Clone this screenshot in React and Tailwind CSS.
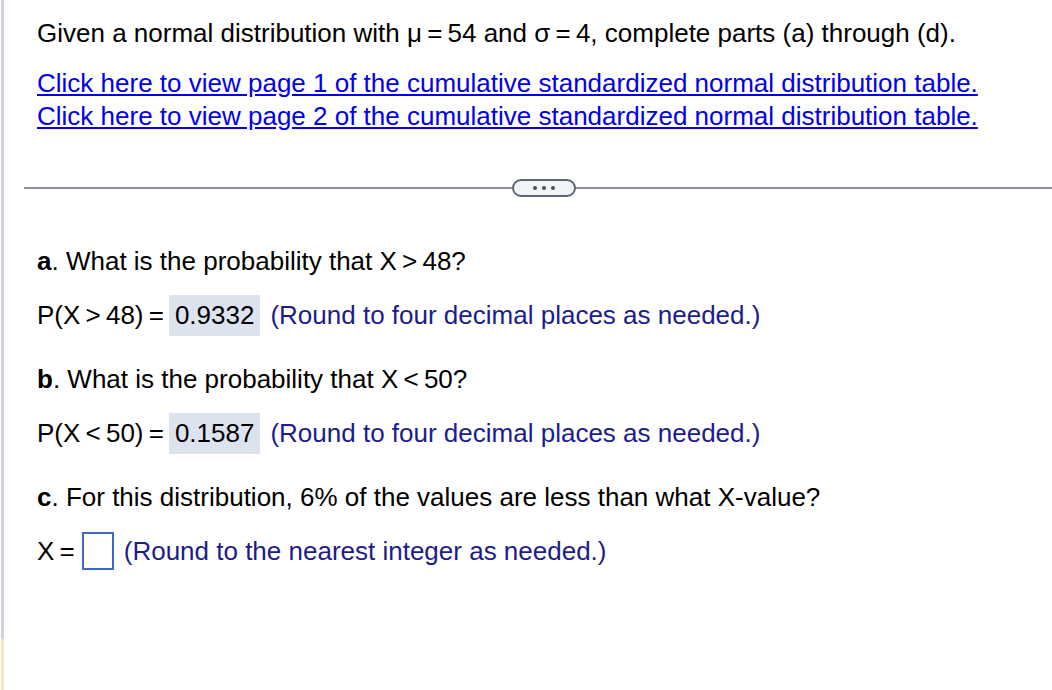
import React from "react";

function Answer({ label, value }) {
  return (
    <div className="flex items-center h-[41px]">
      <span>{label}</span>
      <span className="ml-[5px] h-[41px] px-[6px] flex items-center bg-[#dce3ef]">{value}</span>
      <span className="ml-[10px] text-[#1c1c8c]">(Round to four decimal places as needed.)</span>
    </div>
  );
}

export default function App() {
  return (
    <div
      className="flex w-full min-h-[690px] bg-white text-black text-[26px] leading-[33px]"
      style={{ fontFamily: '"Liberation Sans", Arial, sans-serif' }}
    >
      {/* left strip */}
      <div className="ml-[1px] w-[3px] flex flex-col">
        <div className="flex-1 bg-[#cfd3df]"></div>
        <div className="h-[51px] bg-[#f3e6bf]"></div>
      </div>

      <div className="flex-1">
        <div className="pl-[33px] pt-[17px]">
          <p>Given a normal distribution with μ{"\u2009=\u2009"}54 and σ{"\u2009=\u2009"}4, complete parts (a) through (d).</p>
          <div className="mt-[17px] text-[#0000ee] underline">
            <p>Click here to view page 1 of the cumulative standardized normal distribution table.</p>
            <p>Click here to view page 2 of the cumulative standardized normal distribution table.</p>
          </div>
        </div>

        {/* separator */}
        <div className="mt-[46px] ml-[20px] flex items-center h-[18px]">
          <div className="w-[488px] h-[2px] bg-[#8a909e]"></div>
          <div className="w-[64px] h-[18px] rounded-full border-2 border-[#5f6673] bg-[#f1f3f6] flex items-center justify-center gap-[5px]">
            <span className="w-[4px] h-[4px] rounded-full bg-[#4a4f5a]"></span>
            <span className="w-[4px] h-[4px] rounded-full bg-[#4a4f5a]"></span>
            <span className="w-[4px] h-[4px] rounded-full bg-[#4a4f5a]"></span>
          </div>
          <div className="flex-1 h-[2px] bg-[#8a909e]"></div>
        </div>

        <div className="pl-[33px] mt-[48px]">
          <p>
            <b>a</b>. What is the probability that X{"\u2009>\u2009"}48?
          </p>
          <div className="mt-[17px]">
            <Answer label={"P(X\u2009>\u200948)\u2009="} value="0.9332" />
          </div>

          <p className="mt-[27px]">
            <b>b</b>. What is the probability that X{"\u2009<\u2009"}50?
          </p>
          <div className="mt-[17px]">
            <Answer label={"P(X\u2009<\u200950)\u2009="} value="0.1587" />
          </div>

          <p className="mt-[27px]">
            <b>c</b>. For this distribution, 6% of the values are less than what X-value?
          </p>
          <div className="mt-[18px] flex items-center h-[38px]">
            <span>{"X\u2009="}</span>
            <span className="ml-[7px] w-[32px] h-[38px] border-2 border-[#3f68c4] bg-white"></span>
            <span className="ml-[10px] text-[#1c1c8c]">(Round to the nearest integer as needed.)</span>
          </div>
        </div>
      </div>
    </div>
  );
}
